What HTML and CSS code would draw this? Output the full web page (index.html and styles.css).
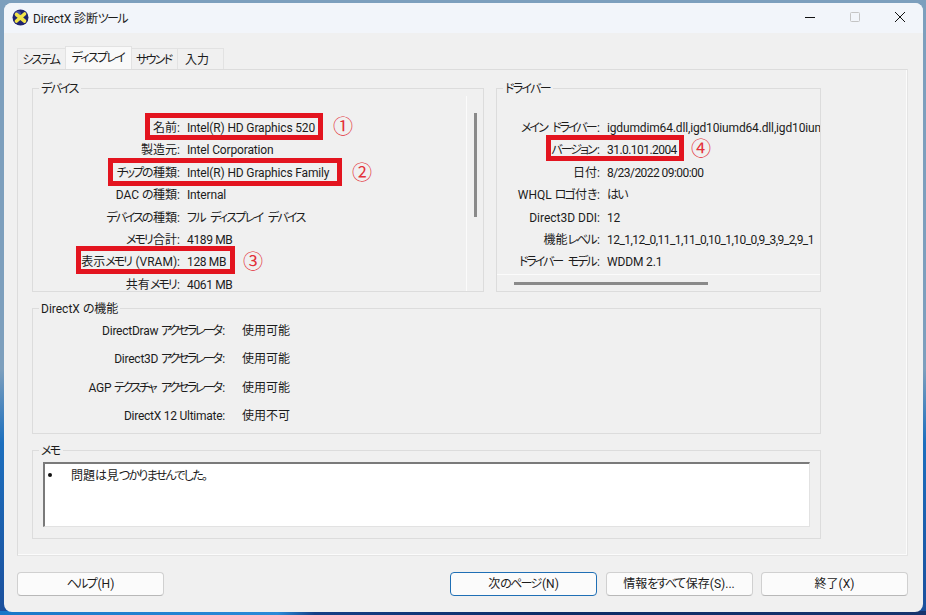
FILE: index.html
```html
<!DOCTYPE html>
<html lang="ja">
<head>
<meta charset="utf-8">
<title>DirectX 診断ツール</title>
<link rel="stylesheet" href="styles.css">
</head>
<body>
<div class="window">
  <header class="titlebar">
    <svg class="app-icon" width="17" height="17" viewBox="0 0 17 17">
      <circle cx="8.5" cy="8.5" r="8" fill="#20246e"/>
      <circle cx="6" cy="5" r="3" fill="#5a64b8" opacity=".7"/>
      <path d="M4.5 5.5 L12.5 12 M12.5 5 L4.5 12" stroke="#f2e34a" stroke-width="3.6" stroke-linecap="round"/>
    </svg>
    <span class="title">DirectX 診断<span class="k">ツール</span></span>
    <div class="controls">
      <svg width="10" height="10" viewBox="0 0 10 10"><path d="M0 5.5H10" stroke="#111" stroke-width="1"/></svg>
      <svg width="10" height="10" viewBox="0 0 10 10"><rect x=".5" y=".5" width="9" height="9" rx="1" fill="none" stroke="#c4c4c4"/></svg>
      <svg width="10" height="10" viewBox="0 0 10 10"><path d="M0 0L10 10M10 0L0 10" stroke="#111" stroke-width="1"/></svg>
    </div>
  </header>
  <main class="content">
    <nav class="tabs">
      <span class="tab"><span class="k">システム</span></span>
      <span class="tab active"><span class="k">ディスプレイ</span></span>
      <span class="tab"><span class="k">サウンド</span></span>
      <span class="tab">入力</span>
    </nav>
    <section class="panel">
      <div class="top-groups">
        <fieldset class="group device">
          <legend><span class="k">デバイス</span></legend>
          <div class="device-body">
            <div class="list device-list">
              <div class="row"><span class="label">名前:</span><span class="value">Intel(R) HD Graphics 520</span><span class="mark mark-1"></span><span class="num num-1">①</span></div>
              <div class="row"><span class="label">製造元:</span><span class="value">Intel Corporation</span></div>
              <div class="row"><span class="label"><span class="k">チップの</span>種類:</span><span class="value">Intel(R) HD Graphics Family</span><span class="mark mark-2"></span><span class="num num-2">②</span></div>
              <div class="row"><span class="label">DAC <span class="k">の</span>種類:</span><span class="value">Internal</span></div>
              <div class="row"><span class="label"><span class="k">デバイスの</span>種類:</span><span class="value"><span class="k">フル ディスプレイ デバイス</span></span></div>
              <div class="row"><span class="label"><span class="k">メモリ</span>合計:</span><span class="value tight">4189 MB</span></div>
              <div class="row"><span class="label">表示<span class="k">メモリ</span> (VRAM):</span><span class="value tight">128 MB</span><span class="mark mark-3"></span><span class="num num-3">③</span></div>
              <div class="row"><span class="label">共有<span class="k">メモリ</span>:</span><span class="value tight">4061 MB</span></div>
            </div>
            <div class="vscroll"><div class="vthumb"></div></div>
          </div>
        </fieldset>
        <fieldset class="group driver">
          <legend><span class="k">ドライバー</span></legend>
          <div class="list driver-list">
            <div class="row"><span class="label"><span class="k">メイン ドライバー</span>:</span><span class="value">igdumdim64.dll,igd10iumd64.dll,igd10iumd32.dll</span></div>
            <div class="row"><span class="label"><span class="k">バージョン</span>:</span><span class="value tighter">31.0.101.2004</span><span class="mark mark-4"></span><span class="num num-4">④</span></div>
            <div class="row"><span class="label">日付:</span><span class="value tighter">8/23/2022 09:00:00</span></div>
            <div class="row"><span class="label">WHQL <span class="k">ロゴ</span>付<span class="k">き</span>:</span><span class="value"><span class="k">はい</span></span></div>
            <div class="row"><span class="label">Direct3D DDI:</span><span class="value">12</span></div>
            <div class="row"><span class="label">機能<span class="k">レベル</span>:</span><span class="value tighter">12_1,12_0,11_1,11_0,10_1,10_0,9_3,9_2,9_1</span></div>
            <div class="row"><span class="label"><span class="k">ドライバー モデル</span>:</span><span class="value">WDDM 2.1</span></div>
          </div>
          <div class="hscroll"><div class="hthumb"></div></div>
        </fieldset>
      </div>
      <fieldset class="group features">
        <legend>DirectX <span class="k">の</span>機能</legend>
        <div class="feature-row"><span class="label">DirectDraw <span class="k">アクセラレータ</span>:</span><span class="value">使用可能</span></div>
        <div class="feature-row"><span class="label">Direct3D <span class="k">アクセラレータ</span>:</span><span class="value">使用可能</span></div>
        <div class="feature-row"><span class="label">AGP <span class="k">テクスチャ アクセラレータ</span>:</span><span class="value">使用可能</span></div>
        <div class="feature-row"><span class="label">DirectX 12 Ultimate:</span><span class="value">使用不可</span></div>
      </fieldset>
      <fieldset class="group memo">
        <legend><span class="k">メモ</span></legend>
        <div class="memo-box"><span class="bullet"></span><span>問題<span class="k">は</span>見<span class="k">つかりませんでした。</span></span></div>
      </fieldset>
    </section>
    <footer class="buttons">
      <button class="btn help"><span class="k">ヘルプ</span>(H)</button>
      <button class="btn focused">次<span class="k">のページ</span>(N)</button>
      <button class="btn">情報<span class="k">をすべて</span>保存(S)...</button>
      <button class="btn">終了(X)</button>
    </footer>
  </main>
</div>
</body>
</html>
```
FILE: styles.css
```css
* { box-sizing: border-box; }
html, body { margin: 0; padding: 0; }
body {
  width: 926px;
  height: 615px;
  overflow: hidden;
  padding: 3px 3px 3px 4px;
  font-family: Roboto, "Noto Sans CJK JP", sans-serif;
  font-size: 12px;
  font-feature-settings: "palt";
  color: #1c1c1c;
  background:
    linear-gradient(90deg, #1a78c8 0, #2a8ad8 30%, #153f86 34%, #0d2c66 60%, #17346e 100%) bottom / 100% 4px no-repeat,
    linear-gradient(180deg, #7d9fbd 0, #7d9fbd 60%, #1c6fbe 72%, #1b4f9c 100%);
}
.k { letter-spacing: -1.7px; word-spacing: 4px; margin-right: 1.5px; }
.window {
  height: 609px;
  display: flex;
  flex-direction: column;
  background: #f0f0f0;
  border-radius: 8px;
  overflow: hidden;
}
.titlebar {
  height: 30px;
  flex: none;
  display: flex;
  align-items: center;
  padding: 0 18px 2px 8px;
  background: #f2f5fa;
}
.title { margin-left: 4px; letter-spacing: -0.1px; }
.controls { margin-left: auto; display: flex; gap: 35px; }
.content { flex: 1; display: flex; flex-direction: column; padding: 14px 15px 0 13px; }
.tabs { display: flex; height: 22px; padding-left: 1px; align-items: flex-end; flex: none; }
.tab {
  height: 21px;
  margin-left: -1px;
  padding-bottom: 2px;
  display: flex;
  align-items: center;
  justify-content: center;
  white-space: nowrap;
  border: 1px solid #e2e2e2;
  border-bottom: 0;
  background: #f0f0f0;
}
.tab:nth-child(1) { width: 49px; }
.tab:nth-child(2) { width: 67px; }
.tab:nth-child(3) { width: 47px; }
.tab:nth-child(4) { width: 47px; justify-content: flex-start; padding-left: 7px; }
.tab.active { height: 23px; padding-bottom: 4px; background: #f9f9f9; position: relative; z-index: 1; }
.panel {
  height: 487px;
  flex: none;
  border: 1px solid #dcdcdc;
  border-right-color: #e4e4e4;
  border-bottom-color: #e4e4e4;
  box-shadow: inset -1px -1px 0 #fbfbfb;
  padding: 10px 0 0 14px;
  display: flex;
  flex-direction: column;
  gap: 8px;
}
.top-groups { display: flex; gap: 12px; }
.group {
  margin: 0;
  padding: 0;
  min-width: 0;
  border: 1px solid #dcdcdc;
}
.group legend { margin-left: 6px; padding: 0 2px; line-height: 18px; height: 16px; }
.device { width: 452px; height: 212px; }
.driver { width: 325px; height: 212px; }
.device-body { display: flex; height: 195px; }
.list { padding-top: 20px; overflow: hidden; }
.device-list { flex: 1; }
.driver-list { height: 178px; }
.row { position: relative; height: 22.4px; padding-top: 1px; line-height: 22.4px; display: flex; align-items: baseline; white-space: nowrap; }
.row .label { text-align: right; flex: none; }
.row .label .k { letter-spacing: -2px; word-spacing: 4.5px; }
.row .value { margin-left: 7px; letter-spacing: -0.15px; }
.row .value.tight { letter-spacing: -0.35px; }
.row .value.tighter { letter-spacing: -0.55px; }
.device-list .label { width: 147px; }
.driver-list .label { width: 103px; }
.mark { position: absolute; border: 5px solid #e3141f; }
.mark-1 { left: 112px; top: -3px; width: 178px; height: 27px; }
.mark-2 { left: 75px; top: -3px; width: 234px; height: 28px; }
.mark-3 { left: 43px; top: -4px; width: 159px; height: 28px; }
.mark-4 { left: 49px; top: -3px; width: 138px; height: 26px; }
.num { position: absolute; color: #e3303a; font-family: "Noto Sans CJK JP", sans-serif; font-feature-settings: normal; font-size: 20px; line-height: 22px; }
.num-1 { left: 300px; top: -1px; }
.num-2 { left: 319px; top: 0; }
.num-3 { left: 210px; top: 0; }
.num-4 { left: 194px; top: -1px; }
.vscroll { width: 17px; flex: none; border-left: 1px solid #fbfbfb; padding: 17px 0 0 7px; }
.vthumb { width: 3px; height: 104px; background: #8a8a8a; }
.hscroll { height: 17px; border-top: 1px solid #fbfbfb; padding: 7px 0 0 17px; }
.hthumb { width: 194px; height: 3px; background: #8a8a8a; }
.features { width: 789px; height: 134px; padding-top: 1px; }
.feature-row { display: flex; align-items: baseline; height: 28.3px; line-height: 28.3px; }
.feature-row .label { width: 192px; text-align: right; letter-spacing: -0.25px; }
.feature-row .label .k { letter-spacing: -2.3px; word-spacing: 5px; }
.feature-row .value { margin-left: 17px; }
.memo { width: 789px; height: 97px; padding: 4px 0 0; }
.memo-box {
  height: 65px;
  margin: 0 10px;
  background: #fff;
  border: 2px solid #7a7a7a;
  border-right: 1px solid #e2e2e2;
  border-bottom: 1px solid #e2e2e2;
  padding: 2px 0 0 2px;
  display: flex;
}
.bullet { width: 24px; flex: none; position: relative; }
.bullet::before { content: ""; position: absolute; left: 1px; top: 7px; width: 4px; height: 4px; border-radius: 50%; background: #111; }
.buttons { display: flex; gap: 8.5px; margin-top: 16px; }
.btn {
  width: 147px;
  height: 24px;
  padding: 0 0 3px;
  font: inherit;
  font-feature-settings: "palt";
  color: inherit;
  background: #fbfbfb;
  border: 1px solid #d0d0d0;
  border-bottom-color: #b8b8b8;
  border-radius: 4px;
}
.help { margin-right: auto; }
.focused { border: 1px solid #1f6fb5; }
```
